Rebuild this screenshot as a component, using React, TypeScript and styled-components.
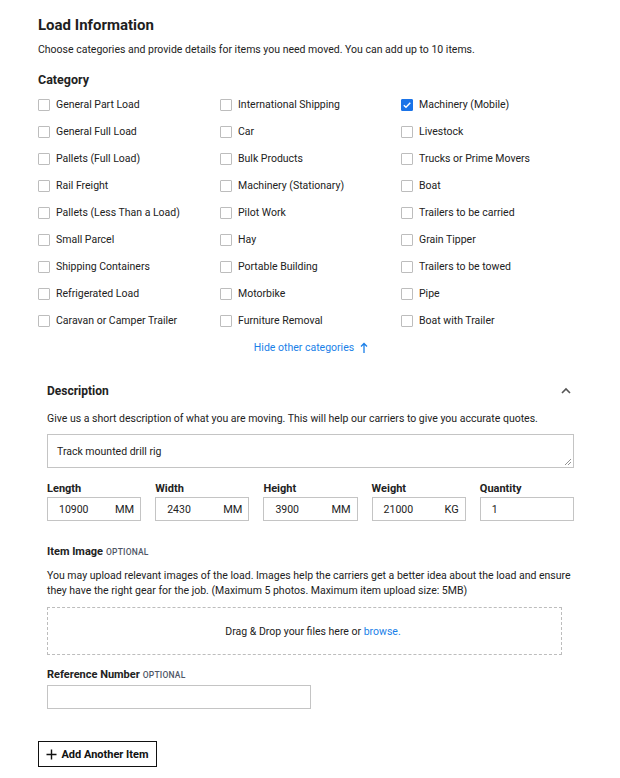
import { createGlobalStyle } from 'styled-components';
import styled from 'styled-components';

const GlobalStyle = createGlobalStyle`
  body {
    margin: 0;
    background: #fff;
    font-family: Roboto, "Liberation Sans", sans-serif;
    color: #222;
  }
  * { box-sizing: border-box; }
`;

const Page = styled.div`
  padding: 15px 38px 12px 38px;
  width: 620px;
`;

const Title = styled.h1`
  margin: 0;
  font-size: 15px;
  font-weight: 700;
  line-height: 20px;
  color: #1e1e1e;
`;

const Intro = styled.p`
  margin: 8px 0 0;
  font-size: 10.5px;
  line-height: 14px;
`;

const CategoryTitle = styled.h2`
  margin: 15px 0 0;
  font-size: 12.5px;
  font-weight: 700;
  line-height: 16px;
`;

const CategoryGrid = styled.div`
  display: grid;
  grid-template-columns: 182px 181px 180px;
  grid-auto-rows: 27px;
  margin-top: 3px;
`;

const CheckRow = styled.label`
  display: flex;
  align-items: center;
  gap: 6px;
  font-size: 10.5px;
  color: #222;
`;

const Box = styled.span<{ $checked?: boolean }>`
  width: 12px;
  height: 12px;
  flex: none;
  display: flex;
  align-items: center;
  justify-content: center;
  border: 1px solid ${(p) => (p.$checked ? '#1a73e8' : '#bdbdbd')};
  background: ${(p) => (p.$checked ? '#1a73e8' : '#fff')};
  border-radius: 1px;
`;

const ToggleLink = styled.div`
  color: #1a7fe8;
  font-size: 10.5px;
  margin: 7px 0 0 2px;
  line-height: 14px;
  display: flex;
  justify-content: center;
  align-items: center;
  gap: 6px;
`;

const ItemCard = styled.section`
  padding: 28px 8px 0 9px;
`;

const SectionHeader = styled.div`
  display: flex;
  justify-content: space-between;
  align-items: center;
  height: 16px;
`;

const SectionTitle = styled.h3`
  margin: 0;
  font-size: 12px;
  font-weight: 700;
  line-height: 16px;
`;

const Help = styled.p<{ $top?: number }>`
  margin: ${(p) => p.$top ?? 12}px 0 0;
  font-size: 10.5px;
  line-height: 15px;
  color: #222;
`;

const TextArea = styled.div`
  margin-top: 8px;
  width: 527px;
  height: 34px;
  border: 1px solid #c4c4c4;
  padding: 10px 9px;
  font-size: 10.5px;
  position: relative;
`;

const Grip = styled.svg`
  position: absolute;
  right: 1px;
  bottom: 1px;
`;

const DimRow = styled.div`
  display: flex;
  gap: 14px;
  margin-top: 14px;
  width: 527px;
`;

const Field = styled.div`
  display: flex;
  flex-direction: column;
  flex: 1;
`;

const FieldLabel = styled.span`
  font-size: 11px;
  font-weight: 700;
  line-height: 14px;
`;

const Optional = styled.span`
  font-size: 8.5px;
  font-weight: 500;
  color: #4f5666;
  letter-spacing: 0.2px;
  margin-left: 3px;
`;

const InputBox = styled.div<{ $width?: number }>`
  height: 24px;
  width: ${(p) => (p.$width ? `${p.$width}px` : 'auto')};
  border: 1px solid #c4c4c4;
  display: flex;
  align-items: center;
  justify-content: space-between;
  padding: 0 6px 0 11px;
  font-size: 10.5px;
  margin-top: 1px;
`;

const Unit = styled.span`
  font-size: 11px;
  color: #222;
`;

const Spacer = styled.div<{ $h: number }>`
  height: ${(p) => p.$h}px;
`;

const DropZone = styled.div`
  margin-top: 9px;
  width: 515px;
  height: 48px;
  border: 1px dashed #bdbdbd;
  display: flex;
  align-items: center;
  justify-content: center;
  padding-left: 17px;
  font-size: 10.5px;
`;

const Link = styled.span`
  color: #1a7fe8;
`;

const AddButton = styled.button`
  margin-top: 32px;
  width: 119px;
  height: 26px;
  border: 1px solid #111;
  background: #fff;
  font-family: Roboto, "Liberation Sans", sans-serif;
  font-size: 11px;
  font-weight: 700;
  color: #111;
  display: flex;
  align-items: center;
  justify-content: center;
  gap: 4px;
  padding: 0;
`;

const columns = [
  [
    'General Part Load',
    'General Full Load',
    'Pallets (Full Load)',
    'Rail Freight',
    'Pallets (Less Than a Load)',
    'Small Parcel',
    'Shipping Containers',
    'Refrigerated Load',
    'Caravan or Camper Trailer',
  ],
  [
    'International Shipping',
    'Car',
    'Bulk Products',
    'Machinery (Stationary)',
    'Pilot Work',
    'Hay',
    'Portable Building',
    'Motorbike',
    'Furniture Removal',
  ],
  [
    'Machinery (Mobile)',
    'Livestock',
    'Trucks or Prime Movers',
    'Boat',
    'Trailers to be carried',
    'Grain Tipper',
    'Trailers to be towed',
    'Pipe',
    'Boat with Trailer',
  ],
];

const checked = new Set(['Machinery (Mobile)']);

const dims = [
  { label: 'Length', value: '10900', unit: 'MM' },
  { label: 'Width', value: '2430', unit: 'MM' },
  { label: 'Height', value: '3900', unit: 'MM' },
  { label: 'Weight', value: '21000', unit: 'KG' },
  { label: 'Quantity', value: '1', unit: '' },
];

function Checkbox({ label }: { label: string }) {
  const on = checked.has(label);
  return (
    <CheckRow>
      <Box $checked={on}>
        {on && (
          <svg width="10" height="10" viewBox="0 0 10 10">
            <path d="M1.8 5.2 L4 7.3 L8.3 2.8" fill="none" stroke="#fff" strokeWidth="1.4" />
          </svg>
        )}
      </Box>
      {label}
    </CheckRow>
  );
}

function App() {
  const cells: string[] = [];
  for (let r = 0; r < 9; r++) for (let c = 0; c < 3; c++) cells.push(columns[c][r]);

  return (
    <Page>
      <GlobalStyle />
      <Title>Load Information</Title>
      <Intro>Choose categories and provide details for items you need moved. You can add up to 10 items.</Intro>
      <CategoryTitle>Category</CategoryTitle>
      <CategoryGrid>
        {cells.map((c) => (
          <Checkbox key={c} label={c} />
        ))}
      </CategoryGrid>
      <ToggleLink>
        Hide other categories
        <svg width="8" height="12" viewBox="0 0 8 12">
          <path d="M4 11 V2 M1 4.5 L4 1.5 L7 4.5" fill="none" stroke="#1a7fe8" strokeWidth="1.3" />
        </svg>
      </ToggleLink>

      <ItemCard>
        <SectionHeader>
          <SectionTitle>Description</SectionTitle>
          <svg width="12" height="8" viewBox="0 0 12 8" style={{ marginRight: 2 }}>
            <path d="M2 6 L6 2 L10 6" fill="none" stroke="#555" strokeWidth="1.6" />
          </svg>
        </SectionHeader>
        <Help $top={12}>Give us a short description of what you are moving. This will help our carriers to give you accurate quotes.</Help>
        <TextArea>
          Track mounted drill rig
          <Grip width="8" height="8" viewBox="0 0 8 8">
            <path d="M7 1 L1 7 M7 4 L4 7" stroke="#777" strokeWidth="0.8" />
          </Grip>
        </TextArea>

        <DimRow>
          {dims.map((d) => (
            <Field key={d.label}>
              <FieldLabel>{d.label}</FieldLabel>
              <InputBox>
                <span>{d.value}</span>
                <Unit>{d.unit}</Unit>
              </InputBox>
            </Field>
          ))}
        </DimRow>

        <Spacer $h={19} />
        <FieldLabel>
          Item Image<Optional>OPTIONAL</Optional>
        </FieldLabel>
        <Help $top={9}>
          You may upload relevant images of the load. Images help the carriers get a better idea about the load and ensure
          they have the right gear for the job. (Maximum 5 photos. Maximum item upload size: 5MB)
        </Help>
        <DropZone>
          Drag &amp; Drop your files here or&nbsp;<Link>browse.</Link>
        </DropZone>

        <Spacer $h={8} />
        <FieldLabel>
          Reference Number<Optional>OPTIONAL</Optional>
        </FieldLabel>
        <InputBox $width={264} style={{ marginTop: 3 }} />
      </ItemCard>

      <AddButton>
        <svg width="11" height="11" viewBox="0 0 11 11">
          <path d="M5.5 0.5 V10.5 M0.5 5.5 H10.5" stroke="#111" strokeWidth="1.4" />
        </svg>
        Add Another Item
      </AddButton>
    </Page>
  );
}

export default App;
